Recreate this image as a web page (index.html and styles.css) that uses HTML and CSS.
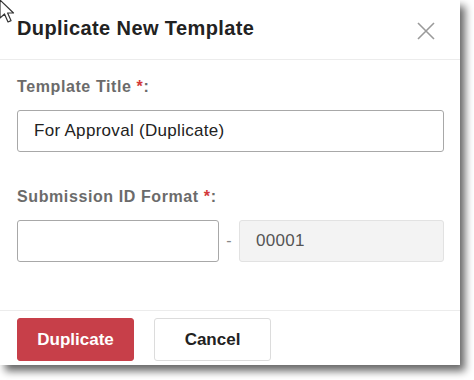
FILE: index.html
```html
<!DOCTYPE html>
<html lang="en">
<head>
    <meta charset="UTF-8">
    <title>Duplicate New Template</title>
    <link rel="stylesheet" href="styles.css">
</head>
<body>
    <div class="modal">
        <div class="modal-header">
            <h2 class="modal-title">Duplicate New Template</h2>
            <button class="modal-close" aria-label="Close">
                <svg width="20" height="20" viewBox="0 0 20 20">
                    <path d="M2 2 L18 18 M18 2 L2 18" stroke="#9a9a9a" stroke-width="1.6" fill="none"/>
                </svg>
            </button>
        </div>
        <div class="modal-body">
            <div class="field">
                <label class="field-label">Template Title <span class="req">*</span>:</label>
                <input class="text-input" type="text" value="For Approval (Duplicate)">
            </div>
            <div class="field">
                <label class="field-label">Submission ID Format <span class="req">*</span>:</label>
                <div class="id-row">
                    <input class="text-input prefix" type="text" value="">
                    <span class="dash">-</span>
                    <input class="text-input counter" type="text" value="00001" disabled>
                </div>
            </div>
        </div>
        <div class="modal-footer">
            <button class="btn btn-primary">Duplicate</button>
            <button class="btn btn-default">Cancel</button>
        </div>
    </div>
    <!-- mouse pointer sitting over the corner -->
    <svg class="cursor" width="20" height="28" viewBox="0 0 20 28">
        <path d="M1 1 L1 19 L5.5 15 L9 23 L12 21.6 L8.6 14 L14.5 14 Z" fill="#fff" stroke="#333" stroke-width="1.2" stroke-linejoin="round"/>
    </svg>
</body>
</html>
```

FILE: styles.css
```css
body {
    margin: 0;
    background: #fff;
    font-family: 'Liberation Sans', Arial, sans-serif;
    position: relative;
    width: 474px;
    height: 380px;
    overflow: hidden;
}
.modal {
    width: 460px;
    height: 365px;
    background: #fff;
    box-shadow: 5px 6px 8px rgba(0, 0, 0, 0.6);
    display: flex;
    flex-direction: column;
    box-sizing: border-box;
}
.modal-header {
    height: 60px;
    box-sizing: border-box;
    padding: 0 24px 0 17px;
    display: flex;
    align-items: center;
    justify-content: space-between;
    border-bottom: 1px solid #ececec;
}
.modal-title {
    margin: 0;
    font-size: 20px;
    font-weight: 700;
    letter-spacing: 0.4px;
    color: #222;
    padding-bottom: 2px;
}
.modal-close {
    background: none;
    border: none;
    padding: 0;
    width: 20px;
    height: 20px;
    cursor: pointer;
    margin-top: 3px;
}
.modal-body {
    flex: 1;
    padding: 18px 16px 0 17px;
}
.field {
    margin-bottom: 36px;
}
.field-label {
    display: block;
    font-size: 16px;
    line-height: 18px;
    font-weight: 700;
    letter-spacing: 0.6px;
    color: #6b6b6b;
    margin-bottom: 14px;
}
.req {
    color: #d33a3a;
}
.text-input {
    display: block;
    width: 100%;
    box-sizing: border-box;
    height: 42px;
    border: 1px solid #a8a8a8;
    border-radius: 3px;
    padding: 0 16px;
    font-family: inherit;
    font-size: 17px;
    letter-spacing: 0.3px;
    color: #222;
    background: #fff;
}
.id-row {
    display: flex;
    align-items: center;
}
.id-row .prefix {
    width: 202px;
}
.dash {
    width: 20px;
    text-align: center;
    color: #888;
    font-size: 16px;
}
.id-row .counter {
    flex: 1;
    background: #f3f3f3;
    border-color: #e2e2e2;
    color: #555;
}
.modal-footer {
    height: 55px;
    box-sizing: border-box;
    border-top: 1px solid #ececec;
    padding: 7px 17px 0 17px;
    display: flex;
    align-items: flex-start;
    gap: 20px;
}
.btn {
    height: 43px;
    width: 117px;
    border-radius: 3px;
    font-family: inherit;
    font-size: 17px;
    font-weight: 700;
    cursor: pointer;
}
.btn-primary {
    background: #c73f49;
    border: 1px solid #c73f49;
    color: #fff;
}
.btn-default {
    background: #fff;
    border: 1px solid #dcdcdc;
    color: #222;
}
.cursor {
    position: absolute;
    left: -1px;
    top: -1px;
}
```
